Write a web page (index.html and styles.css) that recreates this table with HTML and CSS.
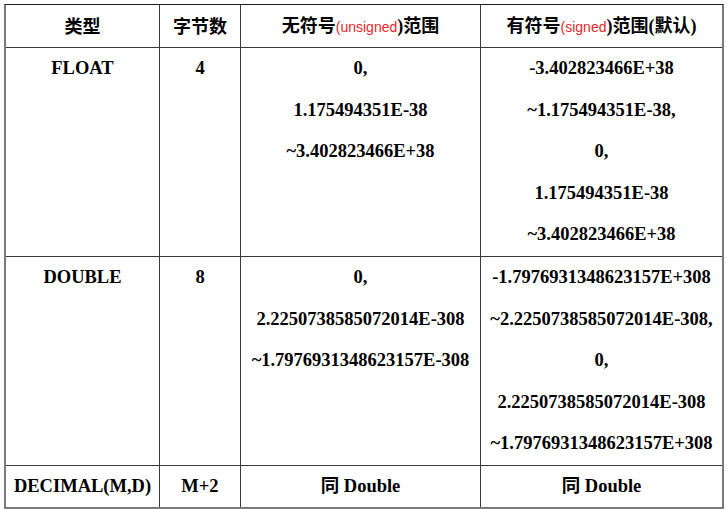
FILE: index.html
```html
<!DOCTYPE html>
<html lang="zh">
<head>
<meta charset="utf-8">
<title>浮点类型</title>
<link rel="stylesheet" href="styles.css">
</head>
<body>
<table class="types">
  <colgroup>
    <col class="c1"><col class="c2"><col class="c3"><col class="c4">
  </colgroup>
  <thead>
    <tr class="head">
      <th>类型</th>
      <th>字节数</th>
      <th>无符号<span class="note">(unsigned</span>)范围</th>
      <th class="last">有符号<span class="note">(signed</span>)范围(默认)</th>
    </tr>
  </thead>
  <tbody>
    <tr class="big r1">
      <td><div class="ln">FLOAT</div></td>
      <td><div class="ln">4</div></td>
      <td>
        <div class="ln">0,</div>
        <div class="ln">1.175494351E-38</div>
        <div class="ln">~3.402823466E+38</div>
      </td>
      <td class="last">
        <div class="ln">-3.402823466E+38</div>
        <div class="ln">~1.175494351E-38,</div>
        <div class="ln">0,</div>
        <div class="ln">1.175494351E-38</div>
        <div class="ln">~3.402823466E+38</div>
      </td>
    </tr>
    <tr class="big r2">
      <td><div class="ln">DOUBLE</div></td>
      <td><div class="ln">8</div></td>
      <td>
        <div class="ln">0,</div>
        <div class="ln">2.2250738585072014E-308</div>
        <div class="ln">~1.7976931348623157E-308</div>
      </td>
      <td class="last">
        <div class="ln">-1.7976931348623157E+308</div>
        <div class="ln">~2.2250738585072014E-308,</div>
        <div class="ln">0,</div>
        <div class="ln">2.2250738585072014E-308</div>
        <div class="ln">~1.7976931348623157E+308</div>
      </td>
    </tr>
    <tr class="foot">
      <td><div class="ln">DECIMAL(M,D)</div></td>
      <td><div class="ln">M+2</div></td>
      <td><div class="ln">同 Double</div></td>
      <td class="last"><div class="ln">同 Double</div></td>
    </tr>
  </tbody>
</table>
</body>
</html>
```
FILE: styles.css
```css
html, body {
  margin: 0;
  padding: 0;
  background: #ffffff;
}

body {
  padding: 4px 0 0 4px;
}

.types {
  border-collapse: separate;
  border-spacing: 0;
  table-layout: fixed;
  width: 720px;
  border-top: 1px solid #1e1e1e;
  border-left: 2px solid #7a7a7a;
  border-right: 2px solid #7a7a7a;
  border-bottom: 2px solid #7a7a7a;
  font-family: "Liberation Serif", "Noto Sans CJK SC", serif;
  font-weight: bold;
  font-size: 18.5px;
  color: #000000;
}

.c1 { width: 154px; }
.c2 { width: 81px; }
.c3 { width: 240px; }
.c4 { width: 241px; }

.types th,
.types td {
  padding: 0;
  text-align: center;
  vertical-align: top;
  border-right: 1px solid #3a3a3a;
  border-bottom: 1px solid #3a3a3a;
  white-space: nowrap;
}

.types .last {
  border-right: none;
}

.types .foot td {
  border-bottom: none;
}

.head th {
  height: 41px;
  padding-top: 1px;
  line-height: 40px;
  font-size: 18px;
  font-weight: bold;
  vertical-align: middle;
}

.note {
  font-family: "Liberation Sans", Arial, sans-serif;
  font-weight: normal;
  font-size: 14px;
  color: #e5262a;
}

.ln {
  line-height: 41.5px;
}

.r1 td { height: 208px; }
.r2 td { height: 207px; }
.foot td { height: 41px; }

.foot .ln {
  line-height: 41px;
}
```
